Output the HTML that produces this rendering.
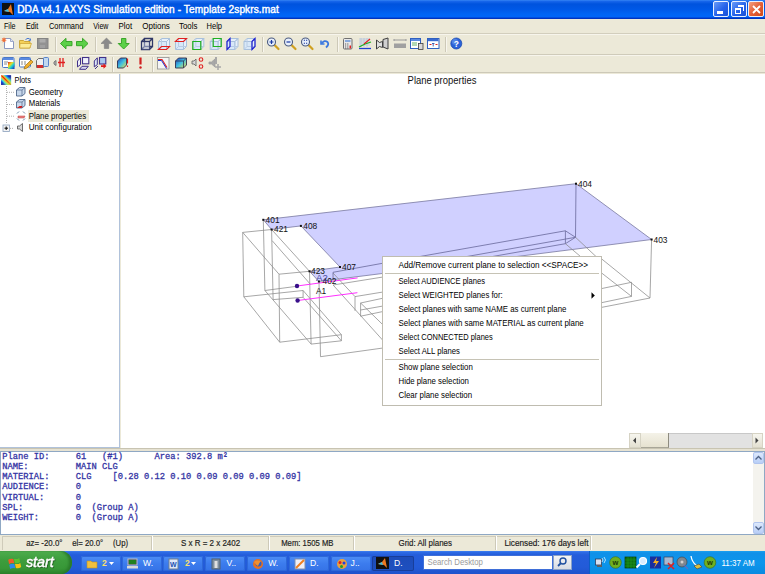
<!DOCTYPE html>
<html><head><meta charset="utf-8">
<style>
*{margin:0;padding:0;box-sizing:border-box}
html,body{width:765px;height:574px;overflow:hidden;background:#ece9d8;font-family:"Liberation Sans",sans-serif;position:relative}
.a{position:absolute}
svg{overflow:visible}
#title{left:0;top:0;width:765px;height:19px;background:linear-gradient(#3d8cf5 0px,#1a68ec 1px,#0053de 4px,#0058e6 9px,#0064f4 14px,#0066f8 17px,#0038c8 18px,#0030b8 19px)}
.tb{width:16px;height:16px;top:1px;border:1px solid #e8f0ff;border-radius:2px;background:linear-gradient(135deg,#6a9cf8,#2562ea 55%,#1a52d8)}
.tsep{width:1px;background:#cdc9b8;box-shadow:1px 0 0 #f8f6ee}
.ssep{top:536px;width:2px;height:14px;border-left:1px solid #cdc9b8;border-right:1px solid #fff}
.btn{top:555.5px;height:15px;width:40px;border-radius:2px;background:linear-gradient(#4d8ef6,#3c7cee 50%,#3572e6);box-shadow:inset 0 0 0 1px #2d68d8}
</style></head><body>
<div id="title" class="a">
  <div class="a" style="left:2px;top:3px;width:11.5px;height:11.5px;background:#101010"></div>
  <svg class="a" style="left:1.5px;top:2.5px" width="13" height="13"><path d="M2 8l4-2 3-5 2 11-3-3z" fill="#f07820"/><path d="M2 8l4-2 1 3z" fill="#40c0e0"/></svg>
  <div class="a tb" style="left:713px"><div class="a" style="left:3px;top:9px;width:6px;height:2.5px;background:#fff"></div></div>
  <div class="a tb" style="left:731px"><div class="a" style="left:3px;top:5.5px;width:6px;height:6px;border:1.3px solid #fff;border-top-width:2px"></div><div class="a" style="left:6px;top:2.5px;width:6px;height:6px;border:1.3px solid #fff;border-top-width:2px;border-left:none;border-bottom:none"></div></div>
  <div class="a tb" style="left:748px;background:linear-gradient(135deg,#f4a080,#e46038 50%,#d04818)"><svg class="a" style="left:2px;top:2px" width="11" height="11"><path d="M2 2L9 9M9 2L2 9" stroke="#fff" stroke-width="1.8"/></svg></div>
</div>
<div class="a" style="left:0;top:33px;width:765px;height:1px;background:#d2cebd"></div>
<div class="a" style="left:0;top:34px;width:765px;height:1px;background:#f7f5ec"></div>
<div class="a" style="left:0;top:53.5px;width:765px;height:1px;background:#cfcbba"></div>
<div class="a" style="left:0;top:54.5px;width:765px;height:1px;background:#f7f5ec"></div>
<div class="a" style="left:0;top:72px;width:765px;height:1.2px;background:#cdc9b8"></div>
<div class="a tsep" style="left:54.5px;top:37px;height:15px"></div><div class="a tsep" style="left:94.5px;top:37px;height:15px"></div><div class="a tsep" style="left:135px;top:37px;height:15px"></div><div class="a tsep" style="left:261.5px;top:37px;height:15px"></div><div class="a tsep" style="left:337px;top:37px;height:15px"></div><div class="a tsep" style="left:444.8px;top:37px;height:15px"></div><div class="a tsep" style="left:71.5px;top:56.5px;height:15px"></div><div class="a tsep" style="left:111.6px;top:56.5px;height:15px"></div><div class="a tsep" style="left:152px;top:56.5px;height:15px"></div>

<!-- tree -->
<div class="a" style="left:0;top:73.5px;width:119px;height:373px;background:#fff"></div>
<div class="a" style="left:119px;top:74px;width:1.2px;height:373.5px;background:#b0c2da"></div>
<div class="a" style="left:0;top:446.8px;width:120px;height:1px;background:#b0c2da"></div>
<div class="a" style="left:28.2px;top:110px;width:61.3px;height:11.5px;background:#ece9d8"></div>

<!-- plot -->
<div class="a" style="left:120.5px;top:73.5px;width:644.5px;height:374.5px;background:#fff"></div>

<!-- hscroll -->
<div class="a" style="left:629px;top:433px;width:134px;height:15px;background:#eeede5"></div>
<div class="a" style="left:629px;top:433px;width:12px;height:15px;background:linear-gradient(#f6f5ee,#e4e1d2);border:1px solid #d6d3c4"></div>
<div class="a" style="left:641px;top:433px;width:27.5px;height:15px;background:linear-gradient(#f4f2e8,#e6e2d0);border-right:1.5px solid #8e8c80;border-bottom:1px solid #a8a698"></div>
<div class="a" style="left:668.5px;top:433px;width:83px;height:15px;background:#e2e2e2;border-top:1px solid #c8c8c8"></div>
<div class="a" style="left:752px;top:433px;width:11px;height:15px;background:linear-gradient(#f6f5ee,#e4e1d2);border:1px solid #d6d3c4"></div>
<svg class="a" style="left:629px;top:433px" width="134" height="15"><path d="M4 7.5l3-3v6z" fill="#444"/><path d="M129.5 7.5l-3-3v6z" fill="#444"/></svg>
<div class="a" style="left:0;top:448px;width:765px;height:1.2px;background:#c8c4b2"></div><div class="a" style="left:0;top:449.2px;width:765px;height:1.8px;background:#e6e2d2"></div>

<!-- text panel -->
<div class="a" style="left:0;top:451px;width:765px;height:83.5px;background:#fff;border:1px solid #8fa8c4"></div>
<div class="a" style="left:752.5px;top:451.5px;width:11px;height:82px;background:#f4f3ee"></div>
<div class="a" style="left:752.5px;top:452px;width:11px;height:12px;border-radius:2px;background:linear-gradient(#dce8fc,#b8cef6);border:1px solid #b0c4ee"></div>
<div class="a" style="left:752.5px;top:522px;width:11px;height:12px;border-radius:2px;background:linear-gradient(#dce8fc,#b8cef6);border:1px solid #b0c4ee"></div>
<svg class="a" style="left:752.5px;top:452px" width="11" height="82"><path d="M2.5 7.5l3-3 3 3" stroke="#4d6185" stroke-width="1.3" fill="none"/><path d="M2.5 74.5l3 3 3-3" stroke="#4d6185" stroke-width="1.3" fill="none"/></svg>

<!-- status bar -->
<div class="a" style="left:2px;top:536px;width:588px;height:14px;border-top:1px solid #cfcbba;border-left:1px solid #cfcbba"></div>
<div class="a ssep" style="left:150.5px"></div>
<div class="a ssep" style="left:267.5px"></div>
<div class="a ssep" style="left:352.5px"></div>
<div class="a ssep" style="left:495px"></div>
<div class="a ssep" style="left:589.5px"></div>

<svg class="a" style="left:0;top:0" width="765" height="574">
<path d="M4.5 38.5h6l3 3v7h-9z" fill="#fff" stroke="#8a98c0" stroke-width="1"/><path d="M10.5 38.5v3h3" fill="#dde4f4" stroke="#8a98c0" stroke-width="0.8"/><path d="M4 37l0.6 1.6 1.6-0.6-0.9 1.5 1.5 0.9-1.6 0.3 0.2 1.7-1.4-1-1.4 1 0.2-1.7-1.6-0.3 1.5-0.9-0.9-1.5 1.6 0.6z" fill="#f07038"/>
<path d="M19.5 40.5h4l1 1h5.5v6.5h-10.5z" fill="#f4d058" stroke="#c8a030" stroke-width="0.9"/><path d="M20 43.5h11.5l-1.8 4.5h-10z" fill="#fcec98" stroke="#d0a838" stroke-width="0.8"/><path d="M25.5 39.5q2.5-2.5 5 0" fill="none" stroke="#4a78d0" stroke-width="1"/><path d="M30.5 38.5v2h-2" fill="none" stroke="#4a78d0" stroke-width="0.9"/>
<rect x="37.5" y="38.5" width="10.5" height="10" fill="#929292" stroke="#848484"/><rect x="39.5" y="39" width="6" height="3.5" fill="#acacac"/><rect x="40" y="45" width="5" height="3" fill="#a0a0a0"/>
<path d="M60.5 43.5l5.5-5.2v3.2h6v4.2h-6v3.2z" fill="#5cd048" stroke="#30a020" stroke-width="0.9"/>
<path d="M88 43.5l-5.5-5.2v3.2h-6v4.2h6v3.2z" fill="#5cd048" stroke="#30a020" stroke-width="0.9"/>
<path d="M106.5 38l5.5 5.5h-3.3v5h-4.4v-5h-3.3z" fill="#8a8a8a" stroke="#808080" stroke-width="0.6"/>
<path d="M123.7 49l5.5-5.5h-3.3v-5h-4.4v5h-3.3z" fill="#5cd048" stroke="#30a020" stroke-width="0.9"/>
<g stroke-width="1" fill="none"><path d="M141.5 41.5h8v8h-8z M144.5 38.5h8v8h-8z M141.5 41.5l3-3 M149.5 41.5l3-3 M149.5 49.5l3-3 M141.5 49.5l3-3" stroke="#303868" stroke-width="1.3"/><path d="M142.3 42.3h7v7h-7z" fill="#c8d0e8" fill-opacity="0.5"/></g>
<g stroke-width="1" fill="none"><path d="M158.5 41.5h8v8h-8z" fill="#d8e8f8" stroke="#a8c0dc"/><path d="M158.5 41.5l3-3h8l-3 3z M166.5 41.5l3-3v8l-3 3z" fill="#e8f0fa" stroke="#a8c0dc"/><path d="M161.5 38.5v8h8 M161.5 46.5l-3 3" stroke="#b8cce4"/><path d="M158.5 49.5l3-3h8l-3 3z" stroke="#e02020" stroke-width="1.2"/></g>
<g stroke-width="1" fill="none"><path d="M175.5 41.5h8v8h-8z" fill="#d8e8f8" stroke="#a8c0dc"/><path d="M175.5 41.5l3-3h8l-3 3z M183.5 41.5l3-3v8l-3 3z" fill="#e8f0fa" stroke="#a8c0dc"/><path d="M178.5 38.5v8h8 M178.5 46.5l-3 3" stroke="#b8cce4"/><path d="M175.5 41.5l3-3h8l-3 3z" stroke="#e02020" stroke-width="1.2"/></g>
<g stroke-width="1" fill="none"><path d="M192.8 41.5h8v8h-8z" fill="#d8e8f8" stroke="#a8c0dc"/><path d="M192.8 41.5l3-3h8l-3 3z M200.8 41.5l3-3v8l-3 3z" fill="#e8f0fa" stroke="#a8c0dc"/><path d="M195.8 38.5v8h8 M195.8 46.5l-3 3" stroke="#b8cce4"/><path d="M192.8 41.5h8v8h-8z" stroke="#20b020" stroke-width="1.2"/></g>
<g stroke-width="1" fill="none"><path d="M210.2 41.5h8v8h-8z" fill="#d8e8f8" stroke="#a8c0dc"/><path d="M210.2 41.5l3-3h8l-3 3z M218.2 41.5l3-3v8l-3 3z" fill="#e8f0fa" stroke="#a8c0dc"/><path d="M213.2 38.5v8h8 M213.2 46.5l-3 3" stroke="#b8cce4"/><path d="M213.2 38.5h8v8h-8z" stroke="#20b020" stroke-width="1.2"/></g>
<g stroke-width="1" fill="none"><path d="M227.0 41.5h8v8h-8z" fill="#d8e8f8" stroke="#a8c0dc"/><path d="M227.0 41.5l3-3h8l-3 3z M235.0 41.5l3-3v8l-3 3z" fill="#e8f0fa" stroke="#a8c0dc"/><path d="M230.0 38.5v8h8 M230.0 46.5l-3 3" stroke="#b8cce4"/><path d="M227.0 41.5l3-3v8l-3 3z" stroke="#2020d0" stroke-width="1.2"/></g>
<g stroke-width="1" fill="none"><path d="M244.0 41.5h8v8h-8z" fill="#d8e8f8" stroke="#a8c0dc"/><path d="M244.0 41.5l3-3h8l-3 3z M252.0 41.5l3-3v8l-3 3z" fill="#e8f0fa" stroke="#a8c0dc"/><path d="M247.0 38.5v8h8 M247.0 46.5l-3 3" stroke="#b8cce4"/><path d="M252.0 41.5l3-3v8l-3 3z" stroke="#2020d0" stroke-width="1.2"/></g>
<path d="M274 44.5l4.5 4.5" stroke="#d0a020" stroke-width="2.2" stroke-linecap="round"/><circle cx="271.5" cy="42" r="4" fill="#e8f0fc" stroke="#4a5a80" stroke-width="1.1"/><path d="M269.5 42h4M271.5 40v4" stroke="#1838a0" stroke-width="1.2"/>
<path d="M291 44.5l4.5 4.5" stroke="#d0a020" stroke-width="2.2" stroke-linecap="round"/><circle cx="288.5" cy="42" r="4" fill="#e8f0fc" stroke="#4a5a80" stroke-width="1.1"/><path d="M286.5 42h4" stroke="#1838a0" stroke-width="1.2"/>
<path d="M308 44.5l4.5 4.5" stroke="#d0a020" stroke-width="2.2" stroke-linecap="round"/><circle cx="305.5" cy="42" r="4" fill="#e8f0fc" stroke="#4a5a80" stroke-width="1.1"/><path d="M303.8 40.3h1.2M306 40.3h1.2M303.8 43.3h1.2M306 43.3h1.2" stroke="#1838a0" stroke-width="1.1"/>
<path d="M321 40.5v3.5h3.5" fill="none" stroke="#3a78e0" stroke-width="1.6"/><path d="M321.5 43.5q3-4 6-1.5q2 2.5-1.5 5.5" fill="none" stroke="#3a78e0" stroke-width="1.8"/>
<rect x="343.5" y="38.5" width="8.5" height="10.5" rx="1" fill="#e8e8e8" stroke="#707070"/><rect x="345" y="40" width="5.5" height="2" fill="#88aadd"/><path d="M345 44h1.2M347.2 44h1.2M345 46h1.2M347.2 46h1.2M345 48h1.2M347.2 48h1.2" stroke="#606060" stroke-width="1"/><rect x="349.5" y="45.5" width="1.5" height="3" fill="#e02020"/>
<path d="M359 39h11M359 41h11M359 43h11M359 45h11M361 38v9M364 38v9M367 38v9" stroke="#b0c0e0" stroke-width="0.7"/><path d="M359 47l6-3 6-2" stroke="#20b020" stroke-width="1.3" fill="none"/><path d="M359 48.5h12" stroke="#2040d0" stroke-width="1.3"/><path d="M364 44l6-5" stroke="#e02020" stroke-width="1.1"/>
<path d="M376.5 40l3 2.5 3-1v6l-3-1-3 2.5z" fill="#e0e0e0" stroke="#404040" stroke-width="1"/><path d="M383 39.5l5-1.5v11l-5-2z" fill="#d0d0d0" stroke="#404040" stroke-width="1"/>
<path d="M394 40h12M394 39v2M406 39v2" stroke="#9a9a9a" stroke-width="1"/><rect x="394" y="43.5" width="12" height="4.5" fill="#a0a0a0"/>
<rect x="410.5" y="38.5" width="10" height="10" fill="#fff" stroke="#3060c0"/><rect x="411" y="39" width="9" height="2" fill="#5a8ae0"/><path d="M412 43h5M412 45h5" stroke="#40a040" stroke-width="0.8"/><rect x="418.5" y="43.5" width="4.5" height="6" fill="#d8d8d8" stroke="#404040" stroke-width="0.8"/>
<rect x="427.5" y="38.5" width="11.5" height="10" fill="#fff" stroke="#3060c0"/><rect x="428" y="39" width="10.5" height="2.2" fill="#3a6ad0"/><path d="M429.5 44.5h2M435.5 44.5h2" stroke="#e02020" stroke-width="1.2"/><path d="M432 43.5h2.5M433.2 43.5v3" stroke="#2040a0" stroke-width="0.8"/>
<circle cx="456.3" cy="43.5" r="5.5" fill="#2a62d8" stroke="#1a4ab0" stroke-width="0.8"/><circle cx="455" cy="41.8" r="3" fill="#6a9af0" opacity="0.6"/><text x="456.3" y="46.8" font-size="8.5" font-weight="bold" fill="#fff" text-anchor="middle" font-family="Liberation Sans">?</text>
<rect x="2.5" y="57.5" width="11.5" height="10" rx="1" fill="#fff" stroke="#4a78c8"/><rect x="3" y="58" width="10.5" height="2" fill="#5a8ae0"/><path d="M4 62h4M4 64h3" stroke="#707070" stroke-width="0.8"/>
<defs><linearGradient id="rb" x1="0" y1="0" x2="1" y2="1"><stop offset="0" stop-color="#e02020"/><stop offset="0.35" stop-color="#f0e020"/><stop offset="0.6" stop-color="#20d0d0"/><stop offset="1" stop-color="#1020c0"/></linearGradient><linearGradient id="cc" x1="0" y1="0" x2="1" y2="1"><stop offset="0" stop-color="#2040c0"/><stop offset="0.5" stop-color="#40c0e0"/><stop offset="1" stop-color="#f0e040"/></linearGradient></defs>
<rect x="8" y="62" width="6.5" height="7" fill="url(#rb)"/>
<rect x="19.5" y="57.5" width="11" height="9.5" rx="1" fill="#fff" stroke="#4a78c8"/><rect x="20" y="58" width="10" height="2" fill="#5a8ae0"/><path d="M21 62h2M24 62h2M21 64h2M24 64h2" stroke="#707070" stroke-width="0.8"/><path d="M24 69l1-3 6-6 2 2-6 6z" fill="#f0b030" stroke="#a07010" stroke-width="0.7"/>
<path d="M36.5 60.5l2-2h5v9h-7z" fill="#f0f0f0" stroke="#606060" stroke-width="0.9"/><path d="M37 65h6v3h-6z" fill="#d03030"/><rect x="43.5" y="57.5" width="5" height="9" rx="1" fill="#c0d8f0" stroke="#4a78c8" stroke-width="0.9"/>
<path d="M54 62l2-1.5v5l-2-1.5z" fill="#c0c0c0" stroke="#606060" stroke-width="0.8"/><path d="M60 58v9M63 58v9M58 62.5h7" stroke="#e02020" stroke-width="1.3"/>
<path d="M77.5 61l3-3.2v6.8l-3 2.3z" fill="#eeeefa" stroke="#40308a" stroke-width="1"/><rect x="82.5" y="57.5" width="6.3" height="6.3" fill="#f0f0fc" stroke="#40308a" stroke-width="1.1"/><path d="M79.5 69.3l2.5-3h6.3l-2.5 3z" fill="#d8d8f0" stroke="#40308a" stroke-width="1"/>
<path d="M94.3 61l3-3.2v6.8l-3 2.3z" fill="#dde8f8" stroke="#40308a" stroke-width="1"/><rect x="99.5" y="57.5" width="6.3" height="6.5" fill="#a8c8f0" stroke="#40308a" stroke-width="1.1"/><path d="M95 69l3-3" stroke="#40308a" stroke-width="1"/><path d="M101 65.3h2.5v-1.8l3 2.6-3 2.6v-1.8h-2.5z" fill="#e01818"/>
<path d="M117.5 61l3-3h6v7l-3 3h-6z" fill="url(#cc)" stroke="#303050" stroke-width="0.9"/><path d="M127.5 58.5v5M127.5 65.5v1.5" stroke="#e02020" stroke-width="1.2"/>
<path d="M140.5 57.5v7" stroke="#d02020" stroke-width="2.2"/><circle cx="140.5" cy="67.5" r="1.2" fill="#d02020"/>
<rect x="157.5" y="57.5" width="11.5" height="11.5" fill="#f4f4f4" stroke="#909090" stroke-width="0.8"/><path d="M158 59.5h4l5 8" fill="none" stroke="#e02020" stroke-width="1.1"/><path d="M158 60.5h3.5l5 8" fill="none" stroke="#2030d0" stroke-width="1"/>
<path d="M175.5 61l3-3h8v7l-3 3h-8z" fill="url(#cc)" stroke="#303050" stroke-width="0.9"/><path d="M175.5 61h8v7M183.5 61l3-3" fill="none" stroke="#303050" stroke-width="0.8"/>
<path d="M192 61h2l2-2v7l-2-2h-2z" fill="#d8d8d8" stroke="#606060" stroke-width="0.8"/><circle cx="201" cy="59.5" r="1.8" fill="none" stroke="#e02020" stroke-width="1.1"/><circle cx="201" cy="66.5" r="1.8" fill="none" stroke="#e02020" stroke-width="1.1"/>
<path d="M209 62h2.5l3.5-3v8l-3.5-3h-2.5z" fill="#a8a8a8" stroke="#a0a0a0" stroke-width="0.8"/><path d="M216 57v7" stroke="#a8a8a8" stroke-width="2"/><path d="M215 67h6M218 64v6" stroke="#a8a8a8" stroke-width="1.5"/>
<g id="treeicons">
<defs><linearGradient id="pl" x1="1" y1="0" x2="0" y2="1"><stop offset="0" stop-color="#000090"/><stop offset="0.18" stop-color="#0020d0"/><stop offset="0.32" stop-color="#20c0f0"/><stop offset="0.42" stop-color="#f0d020"/><stop offset="0.5" stop-color="#e82010"/><stop offset="0.58" stop-color="#f8c020"/><stop offset="0.7" stop-color="#40e0e0"/><stop offset="0.82" stop-color="#0030e0"/><stop offset="1" stop-color="#000098"/></linearGradient>
<linearGradient id="pl2" x1="0" y1="0" x2="1" y2="1"><stop offset="0.4" stop-color="#f0f020" stop-opacity="0"/><stop offset="1" stop-color="#a0f060" stop-opacity="0.7"/></linearGradient></defs>
<rect x="1.1" y="75.2" width="10" height="9.8" fill="url(#pl)"/>
<rect x="1.1" y="75.2" width="10" height="9.8" fill="url(#pl2)"/>
<path d="M6.5 86v38M7 92.3h7M7 104.5h7M7 116.2h7M10 128.4h4" stroke="#a0a0a0" stroke-width="0.8" stroke-dasharray="1,1" fill="none"/>
<path d="M16.5 90l3-2.5h5.5v6l-3 2.5h-5.5z" fill="#c8d8ec" stroke="#50688a" stroke-width="0.9"/><path d="M16.5 90h5.5v6M22 90l3-2.5" fill="none" stroke="#50688a" stroke-width="0.7"/>
<path d="M16.5 102l3-2.5h5.5v6l-3 2.5h-5.5z" fill="#c8d8ec" stroke="#50688a" stroke-width="0.9"/><path d="M16.5 102h5.5v6M22 102l3-2.5" fill="none" stroke="#50688a" stroke-width="0.7"/><path d="M17 108l2.5-2h3l-1 2z" fill="#d02020"/>
<path d="M17 113.5l2-2M23 111.5l2 2M17 118.5l2 2M25 118.5l-2 2" stroke="#6a8aa8" stroke-width="1" fill="none"/><path d="M18 116h7l-1 2h-6z" fill="#f08080" stroke="#b04040" stroke-width="0.5"/>
<rect x="3" y="125" width="6.5" height="6.5" fill="#f4f4f4" stroke="#8aa0bc" stroke-width="0.8"/><path d="M4.5 128.2h3.5M6.2 126.5v3.5" stroke="#000" stroke-width="1"/>
<path d="M17.5 126h2l3-2.5v8l-3-2.5h-2z" fill="#d8d8d8" stroke="#606060" stroke-width="0.9"/>
</g>
<g id="draw">
<polygon points="263.3,219.8 576,183.7 651.6,239.5 318.9,281.5 309.5,271.3 340,267 300.9,225.9 271.6,229.5" fill="#d0d0ff" stroke="#7878a0" stroke-width="0.8"/>
<path d="M263.3 219.8L264.9 290.5M271.6 229.5L273.1 299.6M242.7 232.4L271.6 229.5M242.7 232.4L243.8 296.8M242.7 232.4L279 274.2M271.6 229.5L309.5 271.3M272.2 240.7L310.4 284.3M279 274.2L309.5 271.3M279 274.2L279.7 342.2M309.5 271.3L311.1 344.1M319 281.5L320.5 356.7M264.9 290.5L296 286.4M243.8 296.8L303.1 290.5M303.1 290.5L303.1 297.3M273.1 299.6L303.1 297.3M243.8 296.8L279.7 342.2M279.7 342.2L341.4 334.7M264.9 290.5L311.1 344.1M311.1 344.1L341.4 340.8M341.4 334.7L341.4 340.8M303.1 290.5L341.4 334.7M303.1 297.3L341.4 340.8M320.5 356.7L383 348M333.1 285L383 340.5M333.1 285L383 277M333 273L355 296.6M355 296.6L355 310.8M355 296.6L383 292M360.6 303L383 298.2M360.6 303L360.6 316.2M360.6 316.2L383 311.5M360.6 310L383 306M360.6 303L383 324.9" stroke="#8a8a8a" stroke-width="0.75" fill="none"/>
<path d="M333 272.3L333.1 280.5M333 272.3L383 263.2M420 256.5L565.4 230.8M565.4 230.8L565.4 243.7M565.4 230.8L575.5 237.3M575.5 237.3L467 256.5M565.4 243.7L492.5 256.5M565.4 243.7L575.5 237.3M576 183.7L575.5 237.3" stroke="#68689a" stroke-width="0.8" fill="none"/>
<path d="M575.5 237.3L596 256.5M565.4 243.7L580.5 256.5M651.6 239.5L650 298M650 298L601.5 307.4M631.5 296.4L601.5 302.7M631.5 282.3L631.5 296.4M631.5 282.3L601.5 288.6M601.5 258.8L650 298M601.5 272.9L631.5 296.4" stroke="#8a8a8a" stroke-width="0.75" fill="none"/>
<path d="M297 286L357.6 277.9M297.6 300.5L357.4 292.7" stroke="#ff30ff" stroke-width="1"/>
<circle cx="297" cy="286" r="2.2" fill="#38108a"/><circle cx="297.6" cy="300.5" r="2.2" fill="#38108a"/>
<rect x="262.3" y="218.8" width="2" height="2" fill="#111"/>
<rect x="270.6" y="228.5" width="2" height="2" fill="#111"/>
<rect x="299.9" y="224.9" width="2" height="2" fill="#111"/>
<rect x="575" y="182.7" width="2" height="2" fill="#111"/>
<rect x="650.6" y="238.5" width="2" height="2" fill="#111"/>
<rect x="339" y="266" width="2" height="2" fill="#111"/>
<rect x="308.5" y="270.3" width="2" height="2" fill="#111"/>
<rect x="317.9" y="280.5" width="2" height="2" fill="#111"/>
<text x="265.6" y="222.6" font-size="8.4" fill="#111" font-family="Liberation Sans">401</text>
<text x="274" y="232" font-size="8.4" fill="#111" font-family="Liberation Sans">421</text>
<text x="303.3" y="228.8" font-size="8.4" fill="#111" font-family="Liberation Sans">408</text>
<text x="578" y="186.6" font-size="8.4" fill="#111" font-family="Liberation Sans">404</text>
<text x="653.5" y="242.6" font-size="8.4" fill="#111" font-family="Liberation Sans">403</text>
<text x="342" y="270" font-size="8.4" fill="#111" font-family="Liberation Sans">407</text>
<text x="311" y="274" font-size="8.4" fill="#111" font-family="Liberation Sans">423</text>
<text x="322.5" y="284.2" font-size="8.4" fill="#111" font-family="Liberation Sans">402</text>
<text x="316" y="294.2" font-size="8.4" fill="#111" font-family="Liberation Sans">A1</text>
<text x="316" y="280.5" font-size="9.6" fill="#4848a0" font-family="Liberation Sans">A2</text>
</g>
<text x="2.30" y="458.50" font-size="8.75" fill="#3434a4" stroke="#3434a4" stroke-width="0.3" font-family="Liberation Mono" xml:space="preserve">Plane ID:</text><text x="75.80" y="458.50" font-size="8.75" fill="#3434a4" stroke="#3434a4" stroke-width="0.3" font-family="Liberation Mono" xml:space="preserve">61</text><text x="102.05" y="458.50" font-size="8.75" fill="#3434a4" stroke="#3434a4" stroke-width="0.3" font-family="Liberation Mono" xml:space="preserve">(#1)</text><text x="154.55" y="458.50" font-size="8.75" fill="#3434a4" stroke="#3434a4" stroke-width="0.3" font-family="Liberation Mono" xml:space="preserve">Area:</text><text x="186.05" y="458.50" font-size="8.75" fill="#3434a4" stroke="#3434a4" stroke-width="0.3" font-family="Liberation Mono" xml:space="preserve">392.8</text><text x="217.55" y="458.50" font-size="8.75" fill="#3434a4" stroke="#3434a4" stroke-width="0.3" font-family="Liberation Mono" xml:space="preserve">m²</text><text x="2.30" y="468.80" font-size="8.75" fill="#3434a4" stroke="#3434a4" stroke-width="0.3" font-family="Liberation Mono" xml:space="preserve">NAME:</text><text x="75.80" y="468.80" font-size="8.75" fill="#3434a4" stroke="#3434a4" stroke-width="0.3" font-family="Liberation Mono" xml:space="preserve">MAIN CLG</text><text x="2.30" y="479.10" font-size="8.75" fill="#3434a4" stroke="#3434a4" stroke-width="0.3" font-family="Liberation Mono" xml:space="preserve">MATERIAL:</text><text x="75.80" y="479.10" font-size="8.75" fill="#3434a4" stroke="#3434a4" stroke-width="0.3" font-family="Liberation Mono" xml:space="preserve">CLG</text><text x="112.55" y="479.10" font-size="8.75" fill="#3434a4" stroke="#3434a4" stroke-width="0.3" font-family="Liberation Mono" xml:space="preserve">[0.28 0.12 0.10 0.09 0.09 0.09 0.09]</text><text x="2.30" y="489.40" font-size="8.75" fill="#3434a4" stroke="#3434a4" stroke-width="0.3" font-family="Liberation Mono" xml:space="preserve">AUDIENCE:</text><text x="75.80" y="489.40" font-size="8.75" fill="#3434a4" stroke="#3434a4" stroke-width="0.3" font-family="Liberation Mono" xml:space="preserve">0</text><text x="2.30" y="499.70" font-size="8.75" fill="#3434a4" stroke="#3434a4" stroke-width="0.3" font-family="Liberation Mono" xml:space="preserve">VIRTUAL:</text><text x="75.80" y="499.70" font-size="8.75" fill="#3434a4" stroke="#3434a4" stroke-width="0.3" font-family="Liberation Mono" xml:space="preserve">0</text><text x="2.30" y="510.00" font-size="8.75" fill="#3434a4" stroke="#3434a4" stroke-width="0.3" font-family="Liberation Mono" xml:space="preserve">SPL:</text><text x="75.80" y="510.00" font-size="8.75" fill="#3434a4" stroke="#3434a4" stroke-width="0.3" font-family="Liberation Mono" xml:space="preserve">0</text><text x="91.55" y="510.00" font-size="8.75" fill="#3434a4" stroke="#3434a4" stroke-width="0.3" font-family="Liberation Mono" xml:space="preserve">(Group A)</text><text x="2.30" y="520.30" font-size="8.75" fill="#3434a4" stroke="#3434a4" stroke-width="0.3" font-family="Liberation Mono" xml:space="preserve">WEIGHT:</text><text x="75.80" y="520.30" font-size="8.75" fill="#3434a4" stroke="#3434a4" stroke-width="0.3" font-family="Liberation Mono" xml:space="preserve">0</text><text x="91.55" y="520.30" font-size="8.75" fill="#3434a4" stroke="#3434a4" stroke-width="0.3" font-family="Liberation Mono" xml:space="preserve">(Group A)</text>
</svg>

<!-- context menu -->
<div class="a" style="left:382.3px;top:256px;width:219.5px;height:149.8px;background:#fff;border:1.2px solid #bfbcb0"></div>
<div class="a" style="left:385px;top:273px;width:214px;height:1px;background:#c6c3b5"></div>
<div class="a" style="left:385px;top:359.4px;width:214px;height:1px;background:#c6c3b5"></div>
<svg class="a" style="left:590px;top:291px" width="6" height="8"><path d="M1.5 1.2l3.3 3.3-3.3 3.3z" fill="#000"/></svg>

<!-- taskbar -->
<div class="a" style="left:0;top:551px;width:765px;height:23px;background:linear-gradient(#3f80f2 0px,#2d6ae4 1.5px,#245ddb 4px,#235bd8 16px,#1f52cc 23px)"></div>
<div class="a" style="left:0;top:551px;width:72px;height:23px;border-radius:0 12px 12px 0;background:linear-gradient(#5aba5a 0px,#48a848 3px,#3c9c3c 10px,#389838 17px,#2c842c 23px);box-shadow:inset -3px 0 3px #2a7a2a"></div>
<svg class="a" style="left:7px;top:555px" width="16" height="16"><g transform="rotate(-12 8 8)"><path d="M2 3.5q2.5-1.2 5.2 0.2v4.3q-2.7-1.4-5.2-0.2z" fill="#f05a28"/><path d="M7.8 3.7q2.7 1.4 5.4 0.2v4.3q-2.7 1.2-5.4-0.2z" fill="#5cc030"/><path d="M2 8.6q2.5-1.2 5.2 0.2v4.3q-2.7-1.4-5.2-0.2z" fill="#2a8ae8"/><path d="M7.8 8.8q2.7 1.4 5.4 0.2v4.3q-2.7 1.2-5.4-0.2z" fill="#f8c010"/></g></svg>
<div class="a btn" style="left:80.5px"><svg class="a" style="left:5px;top:3px" width="12" height="10"><path d="M1 2h4l1 1h5v6h-10z" fill="#f0c040" stroke="#c09020" stroke-width="0.6"/></svg><svg class="a" style="left:28px;top:6px" width="6" height="4"><path d="M0 0h5l-2.5 3z" fill="#fff"/></svg></div>
<div class="a btn" style="left:121.8px"><svg class="a" style="left:5px;top:2px" width="12" height="11"><rect x="1" y="1" width="9" height="6" fill="#304050" stroke="#c0c0c0"/><rect x="2" y="2" width="7" height="4" fill="#208020"/><rect x="0" y="8" width="11" height="2.5" fill="#d8d8d8"/></svg></div>
<div class="a btn" style="left:163px"><svg class="a" style="left:5px;top:2px" width="12" height="11"><rect x="1" y="1" width="9" height="10" fill="#dfe8f8" stroke="#708090"/><text x="2" y="9" font-size="7" font-weight="bold" fill="#2050b0" font-family="Liberation Sans">W</text></svg><svg class="a" style="left:28px;top:6px" width="6" height="4"><path d="M0 0h5l-2.5 3z" fill="#fff"/></svg></div>
<div class="a btn" style="left:205.3px"><svg class="a" style="left:5px;top:2px" width="12" height="11"><rect x="2" y="1" width="8" height="10" fill="#8090a0" stroke="#506070"/><rect x="4.5" y="3" width="3" height="7" fill="#e0e0e0"/></svg></div>
<div class="a btn" style="left:247px"><svg class="a" style="left:5px;top:2px" width="12" height="12"><circle cx="6" cy="6" r="5" fill="#e87020"/><circle cx="6.5" cy="5.5" r="3" fill="#3060c0"/><path d="M2 4q3-3 7-1q-2 2-3 5q-2-1-4-4z" fill="#f09030"/></svg></div>
<div class="a btn" style="left:289.4px"><svg class="a" style="left:5px;top:2px" width="12" height="12"><rect x="1" y="1" width="10" height="10" fill="#f0f0f8" stroke="#8090b0"/><path d="M2 10l8-8" stroke="#f08020" stroke-width="2"/></svg></div>
<div class="a btn" style="left:330.6px"><svg class="a" style="left:5px;top:2px" width="12" height="12"><circle cx="6" cy="6" r="5" fill="#e8a040"/><circle cx="4" cy="4.5" r="1.5" fill="#e02020"/><circle cx="8" cy="5" r="1.5" fill="#2040e0"/><circle cx="5.5" cy="8.5" r="1.5" fill="#20a020"/></svg></div>
<div class="a btn" style="left:371.8px;width:42px;background:linear-gradient(#1d4cb8,#1e50c0);box-shadow:inset 0 0 0 1px #183e9a"><svg class="a" style="left:4px;top:1.5px" width="13" height="12"><rect x="0" y="0" width="13" height="12" fill="#101010"/><path d="M2 7l4-2 3-4 2 10-3-3z" fill="#f07820"/><path d="M2 7l4-2 1 3z" fill="#40c0e0"/></svg></div>
<div class="a" style="left:423px;top:554.5px;width:130px;height:15.5px;background:#fff;border:1px solid #3f6fd8"></div>
<div class="a" style="left:552.5px;top:554.5px;width:19px;height:15.5px;background:linear-gradient(#f4f4f4,#d8dce4);border:1px solid #8aa2c8"></div>
<svg class="a" style="left:555px;top:556px" width="14" height="12"><circle cx="8" cy="5" r="3" fill="none" stroke="#2050a0" stroke-width="1.4"/><path d="M6 7l-3 3" stroke="#2050a0" stroke-width="1.8"/></svg>
<div class="a" style="left:588.5px;top:551px;width:176.5px;height:23px;background:linear-gradient(#1ca0f0 0px,#1090e8 2px,#0c96ec 12px,#0a8ae0 23px);border-left:1px solid #0a5ec8"></div>
<svg class="a" style="left:588px;top:551px" width="177" height="23">
<rect x="7.5" y="8" width="6" height="6" fill="#d8e0f0" stroke="#304060" stroke-width="0.8"/><rect x="9" y="14" width="5" height="2" fill="#606060"/><path d="M14 7q2 2 0 4M16 6q3 3 0 6" stroke="#fff" stroke-width="0.7" fill="none"/>
<circle cx="27.5" cy="11.5" r="5.8" fill="#70b020" stroke="#406a10" stroke-width="0.6"/><text x="27.5" y="14.3" font-size="7.5" font-weight="bold" fill="#1a3a08" text-anchor="middle" font-family="Liberation Sans">w</text>
<rect x="37" y="6" width="11" height="11" fill="#107010" stroke="#053a05" stroke-width="0.7"/><path d="M40 6v11M43 6v11M46 6v11M37 9h11M37 12h11M37 15h11" stroke="#20a020" stroke-width="0.5"/>
<circle cx="55" cy="10" r="3.5" fill="#d8ecff" stroke="#fff" stroke-width="1.2"/><path d="M52 13l-3.5 3.5" stroke="#fff" stroke-width="1.8"/>
<rect x="62" y="5.5" width="11" height="12" fill="#1830a0"/><path d="M69 6l-4 6h3l-2 5 5-7h-3z" fill="#f8b020"/>
<rect x="76" y="6" width="9" height="8" fill="#a8b8d0" stroke="#304060" stroke-width="0.7"/><path d="M80 12l6 6M86 12l-6 6" stroke="#e02020" stroke-width="1.5"/>
<circle cx="94" cy="11" r="5" fill="#808890" stroke="#404850" stroke-width="0.7"/><circle cx="94" cy="11" r="1.5" fill="#d0d0d0"/><path d="M96 14l4 4" stroke="#6070c0" stroke-width="1.2"/>
<path d="M103 5q1 6 5 9l4 2" stroke="#fff" stroke-width="1.3" fill="none"/><path d="M106 15l5-2 3 3-5 2z" fill="#d8c040" stroke="#404040" stroke-width="0.6"/>
<circle cx="122" cy="11.5" r="5.8" fill="#70b020" stroke="#406a10" stroke-width="0.6"/><text x="122" y="14.3" font-size="7.5" font-weight="bold" fill="#1a3a08" text-anchor="middle" font-family="Liberation Sans">w</text>
</svg>

<svg class="a" style="left:0;top:0;pointer-events:none" width="765" height="574">
<defs><filter id="sh" x="-10%" y="-10%" width="130%" height="140%"><feDropShadow dx="0.8" dy="0.8" stdDeviation="0.4" flood-color="#1a4a1a" flood-opacity="0.8"/></filter></defs>
<text x="17.20" y="13.4" font-size="10.1" fill="#fff" font-family="Liberation Sans" textLength="261.60" lengthAdjust="spacing" stroke="#fff" stroke-width="0.4" xml:space="preserve">DDA v4.1 AXYS Simulation edition - Template 2spkrs.mat</text>
<text x="3.90" y="29" font-size="8.6" fill="#000" font-family="Liberation Sans" textLength="11.61" lengthAdjust="spacingAndGlyphs" xml:space="preserve">File</text>
<text x="25.90" y="29" font-size="8.6" fill="#000" font-family="Liberation Sans" textLength="12.48" lengthAdjust="spacingAndGlyphs" xml:space="preserve">Edit</text>
<text x="48.90" y="29" font-size="8.6" fill="#000" font-family="Liberation Sans" textLength="34.41" lengthAdjust="spacingAndGlyphs" xml:space="preserve">Command</text>
<text x="93.30" y="29" font-size="8.6" fill="#000" font-family="Liberation Sans" textLength="15.05" lengthAdjust="spacingAndGlyphs" xml:space="preserve">View</text>
<text x="118.60" y="29" font-size="8.6" fill="#000" font-family="Liberation Sans" textLength="13.54" lengthAdjust="spacingAndGlyphs" xml:space="preserve">Plot</text>
<text x="142.20" y="29" font-size="8.6" fill="#000" font-family="Liberation Sans" textLength="27.68" lengthAdjust="spacingAndGlyphs" xml:space="preserve">Options</text>
<text x="179.00" y="29" font-size="8.6" fill="#000" font-family="Liberation Sans" textLength="18.37" lengthAdjust="spacingAndGlyphs" xml:space="preserve">Tools</text>
<text x="206.50" y="29" font-size="8.6" fill="#000" font-family="Liberation Sans" textLength="15.51" lengthAdjust="spacingAndGlyphs" xml:space="preserve">Help</text>
<text x="14.50" y="82.6" font-size="8.7" fill="#000" font-family="Liberation Sans" textLength="16.34" lengthAdjust="spacingAndGlyphs" xml:space="preserve">Plots</text>
<text x="28.70" y="94.8" font-size="8.7" fill="#000" font-family="Liberation Sans" textLength="34.11" lengthAdjust="spacingAndGlyphs" xml:space="preserve">Geometry</text>
<text x="28.70" y="106.4" font-size="8.7" fill="#000" font-family="Liberation Sans" textLength="31.42" lengthAdjust="spacingAndGlyphs" xml:space="preserve">Materials</text>
<text x="28.70" y="118.6" font-size="8.7" fill="#000" font-family="Liberation Sans" textLength="57.50" lengthAdjust="spacingAndGlyphs" xml:space="preserve">Plane properties</text>
<text x="28.70" y="130.2" font-size="8.7" fill="#000" font-family="Liberation Sans" textLength="62.94" lengthAdjust="spacingAndGlyphs" xml:space="preserve">Unit configuration</text>
<text x="407.60" y="83.7" font-size="10.8" fill="#111" font-family="Liberation Sans" textLength="68.77" lengthAdjust="spacingAndGlyphs" xml:space="preserve">Plane properties</text>
<text x="26.20" y="545.8" font-size="9.0" fill="#222" font-family="Liberation Sans" textLength="36.25" lengthAdjust="spacingAndGlyphs" stroke="#222" stroke-width="0.18" xml:space="preserve">az= -20.0°</text>
<text x="72.20" y="545.8" font-size="9.0" fill="#222" font-family="Liberation Sans" textLength="31.05" lengthAdjust="spacingAndGlyphs" stroke="#222" stroke-width="0.18" xml:space="preserve">el= 20.0°</text>
<text x="113.00" y="545.8" font-size="9.0" fill="#222" font-family="Liberation Sans" textLength="15.00" lengthAdjust="spacingAndGlyphs" stroke="#222" stroke-width="0.18" xml:space="preserve">(Up)</text>
<text x="181.00" y="545.8" font-size="9.0" fill="#222" font-family="Liberation Sans" textLength="59.10" lengthAdjust="spacingAndGlyphs" stroke="#222" stroke-width="0.18" xml:space="preserve">S x R = 2 x 2402</text>
<text x="281.20" y="545.8" font-size="9.0" fill="#222" font-family="Liberation Sans" textLength="52.30" lengthAdjust="spacingAndGlyphs" stroke="#222" stroke-width="0.18" xml:space="preserve">Mem: 1505 MB</text>
<text x="398.50" y="545.8" font-size="9.0" fill="#222" font-family="Liberation Sans" textLength="53.46" lengthAdjust="spacingAndGlyphs" stroke="#222" stroke-width="0.18" xml:space="preserve">Grid: All planes</text>
<text x="504.40" y="545.8" font-size="9.0" fill="#222" font-family="Liberation Sans" textLength="84.14" lengthAdjust="spacingAndGlyphs" stroke="#222" stroke-width="0.18" xml:space="preserve">Licensed: 176 days left</text>
<text x="721.50" y="565.7" font-size="8.6" fill="#fff" font-family="Liberation Sans" textLength="33.25" lengthAdjust="spacingAndGlyphs" xml:space="preserve">11:37 AM</text>
<text x="427.50" y="565.3" font-size="8.8" fill="#9a9a9a" font-family="Liberation Sans" textLength="55.40" lengthAdjust="spacingAndGlyphs" xml:space="preserve">Search Desktop</text>
<text x="25.90" y="566.8" font-size="13.8" fill="#fff" font-family="Liberation Sans" font-style="italic" textLength="27.79" lengthAdjust="spacingAndGlyphs" stroke="#fff" stroke-width="0.35" filter="url(#sh)" xml:space="preserve">start</text>
<text x="398.50" y="268.3" font-size="8.7" fill="#000" font-family="Liberation Sans" textLength="189.57" lengthAdjust="spacingAndGlyphs" xml:space="preserve">Add/Remove current plane to selection &lt;&lt;SPACE&gt;&gt;</text>
<text x="398.50" y="284.2" font-size="8.7" fill="#000" font-family="Liberation Sans" textLength="86.53" lengthAdjust="spacingAndGlyphs" xml:space="preserve">Select AUDIENCE planes</text>
<text x="398.50" y="298" font-size="8.7" fill="#000" font-family="Liberation Sans" textLength="104.17" lengthAdjust="spacingAndGlyphs" xml:space="preserve">Select WEIGHTED planes for:</text>
<text x="398.50" y="312.1" font-size="8.7" fill="#000" font-family="Liberation Sans" textLength="167.95" lengthAdjust="spacingAndGlyphs" xml:space="preserve">Select planes with same NAME as current plane</text>
<text x="398.50" y="326.2" font-size="8.7" fill="#000" font-family="Liberation Sans" textLength="185.25" lengthAdjust="spacingAndGlyphs" xml:space="preserve">Select planes with same MATERIAL as current plane</text>
<text x="398.50" y="340.3" font-size="8.7" fill="#000" font-family="Liberation Sans" textLength="94.24" lengthAdjust="spacingAndGlyphs" xml:space="preserve">Select CONNECTED planes</text>
<text x="398.50" y="354.4" font-size="8.7" fill="#000" font-family="Liberation Sans" textLength="61.42" lengthAdjust="spacingAndGlyphs" xml:space="preserve">Select ALL planes</text>
<text x="398.50" y="370.1" font-size="8.7" fill="#000" font-family="Liberation Sans" textLength="74.35" lengthAdjust="spacingAndGlyphs" xml:space="preserve">Show plane selection</text>
<text x="398.50" y="384.3" font-size="8.7" fill="#000" font-family="Liberation Sans" textLength="70.45" lengthAdjust="spacingAndGlyphs" xml:space="preserve">Hide plane selection</text>
<text x="398.50" y="398.4" font-size="8.7" fill="#000" font-family="Liberation Sans" textLength="73.65" lengthAdjust="spacingAndGlyphs" xml:space="preserve">Clear plane selection</text>
<text x="102.00" y="566" font-size="8.6" fill="#f8e070" font-family="Liberation Sans" font-weight="bold" xml:space="preserve">2</text>
<text x="143.00" y="566" font-size="8.6" fill="#fff" font-family="Liberation Sans" xml:space="preserve">W.</text>
<text x="185.00" y="566" font-size="8.6" fill="#f8e070" font-family="Liberation Sans" font-weight="bold" xml:space="preserve">2</text>
<text x="226.50" y="566" font-size="8.6" fill="#fff" font-family="Liberation Sans" xml:space="preserve">V..</text>
<text x="268.20" y="566" font-size="8.6" fill="#fff" font-family="Liberation Sans" xml:space="preserve">W.</text>
<text x="310.10" y="566" font-size="8.6" fill="#fff" font-family="Liberation Sans" xml:space="preserve">D.</text>
<text x="350.60" y="566" font-size="8.6" fill="#fff" font-family="Liberation Sans" xml:space="preserve">J..</text>
<text x="394.00" y="566" font-size="8.6" fill="#fff" font-family="Liberation Sans" xml:space="preserve">D.</text>
</svg>
</body></html>
